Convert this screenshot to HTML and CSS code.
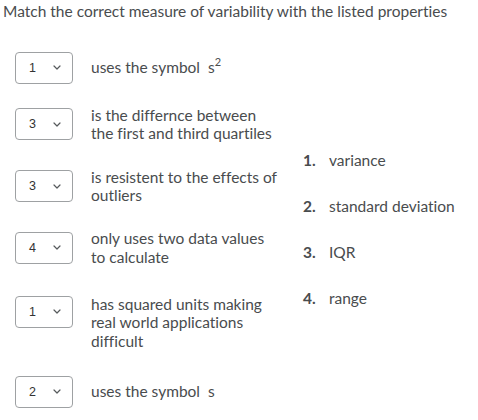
FILE: index.html
```html
<!DOCTYPE html>
<html>
<head>
<meta charset="utf-8">
<link rel="stylesheet" href="styles.css">
</head>
<body>
<div class="title">Match the correct measure of variability with the listed properties</div>
<div class="match">
  <div class="left">
    <div class="row r1">
      <div class="sel"><span class="val">1</span><svg class="chev" width="8" height="5" viewBox="0 0 8 5"><path d="M1 1l3 3 3-3" fill="none" stroke="#565a5c" stroke-width="1.2" stroke-linecap="round" stroke-linejoin="round"/></svg></div>
      <div class="txt">uses the symbol&nbsp; s<sup>2</sup></div>
    </div>
    <div class="row r2">
      <div class="sel"><span class="val">3</span><svg class="chev" width="8" height="5" viewBox="0 0 8 5"><path d="M1 1l3 3 3-3" fill="none" stroke="#565a5c" stroke-width="1.2" stroke-linecap="round" stroke-linejoin="round"/></svg></div>
      <div class="txt">is the differnce between<br>the first and third quartiles</div>
    </div>
    <div class="row r3">
      <div class="sel"><span class="val">3</span><svg class="chev" width="8" height="5" viewBox="0 0 8 5"><path d="M1 1l3 3 3-3" fill="none" stroke="#565a5c" stroke-width="1.2" stroke-linecap="round" stroke-linejoin="round"/></svg></div>
      <div class="txt">is resistent to the effects of<br>outliers</div>
    </div>
    <div class="row r4">
      <div class="sel"><span class="val">4</span><svg class="chev" width="8" height="5" viewBox="0 0 8 5"><path d="M1 1l3 3 3-3" fill="none" stroke="#565a5c" stroke-width="1.2" stroke-linecap="round" stroke-linejoin="round"/></svg></div>
      <div class="txt">only uses two data values<br>to calculate</div>
    </div>
    <div class="row r5">
      <div class="sel"><span class="val">1</span><svg class="chev" width="8" height="5" viewBox="0 0 8 5"><path d="M1 1l3 3 3-3" fill="none" stroke="#565a5c" stroke-width="1.2" stroke-linecap="round" stroke-linejoin="round"/></svg></div>
      <div class="txt">has squared units making<br>real world applications<br>difficult</div>
    </div>
    <div class="row r6">
      <div class="sel"><span class="val">2</span><svg class="chev" width="8" height="5" viewBox="0 0 8 5"><path d="M1 1l3 3 3-3" fill="none" stroke="#565a5c" stroke-width="1.2" stroke-linecap="round" stroke-linejoin="round"/></svg></div>
      <div class="txt">uses the symbol&nbsp; s</div>
    </div>
  </div>
  <ol class="right">
    <li><span class="num">1.</span><span>variance</span></li>
    <li><span class="num">2.</span><span>standard deviation</span></li>
    <li><span class="num">3.</span><span>IQR</span></li>
    <li><span class="num">4.</span><span>range</span></li>
  </ol>
</div>
</body>
</html>
```
FILE: styles.css
```css
html, body { margin: 0; padding: 0; background: #fff; }
body {
  font-family: Lato, "Liberation Sans", sans-serif;
  color: #494c4e;
  width: 478px;
  height: 420px;
  overflow: hidden;
  font-variant-ligatures: none;
}
.title {
  font-size: 15.5px;
  line-height: 18.5px;
  padding: 2px 0 0 3px;
}
.match {
  display: flex;
  align-items: center;
  margin-top: 31px;
}
.left {
  width: 288px;
  padding-left: 15px;
  box-sizing: border-box;
  display: flex;
  flex-direction: column;
}
.row {
  display: flex;
  align-items: center;
}
.sel {
  width: 58px;
  height: 32px;
  box-sizing: border-box;
  border: 1px solid #9ea1a3;
  border-radius: 4px;
  display: flex;
  align-items: center;
  flex-shrink: 0;
}
.val {
  font-family: "Liberation Sans", Arial, sans-serif;
  font-size: 12.5px;
  margin-left: 13px;
  width: 24px;
  color: #333;
}
.chev { display: block; }
.txt {
  margin-left: 18px;
  font-size: 15.5px;
  line-height: 18.5px;
}
sup {
  font-size: 11px;
  line-height: 0;
  vertical-align: 7px;
}
.r2 { margin-top: 22px; }
.r3 { margin-top: 25px; }
.r4 { margin-top: 24.5px; }
.r5 { margin-top: 28.5px; align-items: flex-start; }
.r5 .sel { margin-top: 1px; }
.r6 { margin-top: 25.5px; }
.right {
  list-style: none;
  margin: 0;
  padding: 0;
  display: flex;
  flex-direction: column;
  gap: 27.5px;
}
.right li {
  display: flex;
  font-size: 15.5px;
  line-height: 18.5px;
}
.num {
  width: 26px;
  padding-left: 15px;
  font-weight: bold;
  color: #494c4e;
}
```
